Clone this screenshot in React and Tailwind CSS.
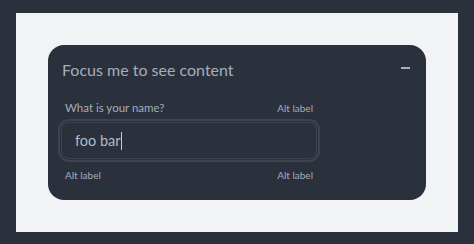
export default function App() {
  return (
    <div className="w-[474px] h-[244px] bg-[#2a303c] pl-4 pr-4 pt-[13px] pb-3" style={{ fontFamily: 'Lato, sans-serif' }}>
      <div className="h-full bg-[#f2f3f5] pt-8 pl-8 pr-8">
        <div className="w-[378px] h-[155px] rounded-2xl bg-[#2a303c] text-[#a6adbb] pl-[14px] pr-4 pt-[10px]">
          <div className="flex items-center justify-between h-[30px]">
            <span className="text-[16px]">Focus me to see content</span>
            <span className="w-[9px] h-[2px] bg-[#a6adbb] -mt-[4px]"></span>
          </div>
          <div className="w-[256px] ml-[-1px] mt-[15px]">
            <div className="flex justify-between items-center px-1 h-[16px]">
              <span className="text-[11.5px]">What is your name?</span>
              <span className="text-[10px]">Alt label</span>
            </div>
            <div className="mt-[6px] h-[37px] rounded-lg border border-[#3d4350] outline-2 outline-offset-1 outline-[#3d4350] flex items-center pl-[13px]">
              <span className="text-[14.5px] text-[#b3bac7]">foo bar</span>
              <span className="w-px h-[18px] bg-[#c8ced8]"></span>
            </div>
            <div className="flex justify-between items-center px-1 h-[16px] mt-[8px]">
              <span className="text-[10px]">Alt label</span>
              <span className="text-[10px]">Alt label</span>
            </div>
          </div>
        </div>
      </div>
    </div>
  );
}
